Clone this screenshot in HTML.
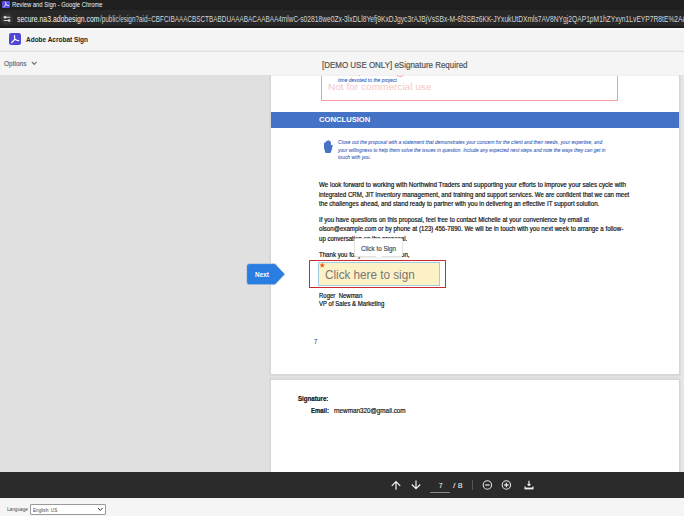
<!DOCTYPE html>
<html><head><meta charset="utf-8">
<style>
*{margin:0;padding:0;box-sizing:border-box}
html,body{width:684px;height:516px;overflow:hidden;background:#e0e0e0;font-family:"Liberation Sans",sans-serif}
.a{position:absolute}
.tx{position:absolute;white-space:nowrap;line-height:1;transform-origin:0 50%;font-family:"Liberation Sans",sans-serif}
</style></head><body>
<!-- chrome title bar -->
<div class="a" style="left:0;top:0;width:684px;height:9.6px;background:#1f1f1f"></div>
<div class="a" style="left:1.5px;top:1px;width:8px;height:7px;background:#5a4ee6;border-radius:1px"></div>
<svg class="a" style="left:1.5px;top:1px" width="8" height="7" viewBox="0 0 8 7"><path d="M3.7 1.2 Q3.7 2.8 4 3.6 L1.8 5.8 M4 3.6 Q5.1 4.5 6.5 4.6" stroke="#fff" stroke-width="0.9" fill="none" stroke-linecap="round"/></svg>
<!-- url bar -->
<div class="a" style="left:0;top:9.6px;width:684px;height:18px;background:#282828"></div>
<div class="a" style="left:0;top:26.2px;width:684px;height:1.4px;background:#1d1d1d"></div>
<div class="a" style="left:1.2px;top:13.4px;width:11.6px;height:11.6px;border-radius:50%;background:#353535"></div>
<svg class="a" style="left:1px;top:13px" width="12" height="12" viewBox="0 0 12 12"><path d="M4 4.3 H9.2 M2.8 7.5 H8" stroke="#e0e0e0" stroke-width="1.1" fill="none"/><circle cx="4" cy="4.3" r="1.3" fill="#e0e0e0"/><circle cx="8.1" cy="7.5" r="1.3" fill="#e0e0e0"/></svg>
<!-- acrobat header -->
<div class="a" style="left:0;top:27.6px;width:684px;height:23.6px;background:#f4f4f4;border-bottom:1px solid #ededed"></div>
<div class="a" style="left:0;top:27.6px;width:684px;height:2px;background:#f9f9f9"></div>
<div class="a" style="left:9px;top:33px;width:12px;height:12px;background:#5047d4;border-radius:2.2px"></div>
<svg class="a" style="left:9px;top:33px" width="12" height="12" viewBox="0 0 12 12"><path d="M5.5 2.7 Q5.5 5 5.9 6.3 L2.6 9.6 M5.9 6.3 Q7.6 7.6 9.7 7.7" stroke="#fff" stroke-width="1.25" fill="none" stroke-linecap="round" stroke-linejoin="round"/></svg>
<!-- main area -->
<div class="a" style="left:0;top:75px;width:684px;height:397px;background:#e0e0e0"></div>
<div class="a" style="left:679px;top:75px;width:5px;height:397px;background:#e6e6e6"></div>
<!-- page 1 -->
<div class="a" style="left:271px;top:75px;width:408px;height:299px;background:#fff;overflow:hidden;box-shadow:0 0 0 1.6px #d6d6d6">
  <div class="a" style="left:49.6px;top:-40px;width:297.4px;height:66.2px;border:1.5px solid #f49b9b"></div>
  <div class="a" style="left:0;top:37px;width:408px;height:16px;background:#4472c4"></div>
</div>
<!-- options bar -->
<div class="a" style="left:0;top:52px;width:684px;height:23px;background:#f5f5f5"></div>
<svg class="a" style="left:30.5px;top:61px" width="7" height="5" viewBox="0 0 7 5"><path d="M0.9 0.9 L3.2 3.4 L5.5 0.9" stroke="#6a6a6a" stroke-width="1.1" fill="none"/></svg>
<div class="a" style="left:271px;top:75px;width:408px;height:1px;background:#f0f0f0"></div>
<svg class="a" style="left:396px;top:74px" width="8" height="4" viewBox="0 0 8 4"><path d="M0.8 1.2 Q4 4.2 7.2 1.2" stroke="#f7b4b4" stroke-width="1.1" fill="none"/></svg>
<div class="a" style="left:359px;top:75px;width:1.2px;height:1.2px;background:#8aa2dc;border-radius:50%"></div>
<!-- page 2 -->
<div class="a" style="left:271px;top:380px;width:408px;height:92px;background:#fff;box-shadow:0 0 0 1.6px #d6d6d6"></div>
<!-- hand -->
<svg class="a" style="left:324px;top:140px" width="9" height="13" viewBox="0 0 9 13"><path d="M1.6 13 L0.9 10.8 L0 8.2 L0 3.4 Q0 2.6 0.9 2.6 L1.7 2.6 L1.8 1.5 Q2.3 0.7 3.3 1 L3.8 0.4 Q4.8 -0.2 5.4 0.7 L5.6 1.2 Q6.8 1.1 6.9 2.2 L6.9 5.6 L7.7 4.7 Q8.9 4.5 8.7 5.6 L7.6 10.3 L6.4 13 Z" fill="#4472c4"/></svg>
<!-- sign field -->
<div class="a" style="left:308.7px;top:259.7px;width:137.6px;height:28.4px;border:1.5px solid #cd2a2d;border-radius:0.5px"></div>
<div class="a" style="left:317.9px;top:262px;width:122.1px;height:24px;background:#fdf2c6;border:1px solid #a3cbe2"></div>
<svg class="a" style="left:318.5px;top:262px" width="7" height="7" viewBox="0 0 7 7"><polygon points="3.2,0.6 3.9,2.5 5.9,2.5 4.3,3.7 4.9,5.7 3.2,4.5 1.5,5.7 2.1,3.7 0.5,2.5 2.5,2.5" fill="#fa4a16"/></svg>
<!-- next button -->
<svg class="a" style="left:246px;top:263px" width="40" height="23" viewBox="0 0 40 23"><path d="M3.5 0.6 H29 L39 11.2 L29 21.8 H3.5 Q0.6 21.8 0.6 18.9 V3.5 Q0.6 0.6 3.5 0.6 Z" fill="#2a7de1" stroke="#ece2d6" stroke-width="0.6"/></svg>
<!-- bottom toolbar -->
<div class="a" style="left:0;top:472px;width:684px;height:26px;background:#2b2b2b"></div>
<svg class="a" style="left:389.6px;top:479.6px" width="12" height="12" viewBox="0 0 12 12"><path d="M6 9.8 V1.8 M1.8 5.8 L6 1.6 L10.2 5.8" stroke="#f2f2f2" stroke-width="1.2" fill="none"/></svg>
<svg class="a" style="left:410.1px;top:479.2px" width="12" height="12" viewBox="0 0 12 12"><path d="M6 1.6 V9.6 M1.8 5.5 L6 9.7 L10.2 5.5" stroke="#f2f2f2" stroke-width="1.2" fill="none"/></svg>
<div class="a" style="left:429.7px;top:491.6px;width:20.2px;height:1px;background:#8a8a8a"></div>
<div class="a" style="left:472px;top:480px;width:1px;height:10px;background:#555"></div>
<svg class="a" style="left:482px;top:480px" width="11" height="11" viewBox="0 0 11 11"><circle cx="5.4" cy="5" r="4.2" fill="none" stroke="#e0e0e0" stroke-width="1.1"/><path d="M3.2 5 H7.6" stroke="#e0e0e0" stroke-width="1.3"/></svg>
<svg class="a" style="left:501.2px;top:480px" width="11" height="11" viewBox="0 0 11 11"><circle cx="5.4" cy="5" r="4.2" fill="none" stroke="#e0e0e0" stroke-width="1.1"/><path d="M3.2 5 H7.6 M5.4 2.8 V7.2" stroke="#e0e0e0" stroke-width="1.3"/></svg>
<svg class="a" style="left:524px;top:479.5px" width="10" height="10" viewBox="0 0 10 10"><path d="M5 0.8 V5.2" stroke="#f0f0f0" stroke-width="1.2" fill="none"/><path d="M2.9 4 L7.1 4 L5 6.2 Z" fill="#f0f0f0"/><path d="M1.1 6.6 V8.6 H8.9 V6.6" stroke="#f0f0f0" stroke-width="1.3" fill="none"/><rect x="1.1" y="7.6" width="7.8" height="1.6" fill="#f0f0f0"/></svg>
<!-- language bar -->
<div class="a" style="left:0;top:498px;width:684px;height:18px;background:#f5f5f5"></div>
<div class="a" style="left:30.3px;top:504px;width:75.6px;height:10.8px;background:#fff;border:1px solid #9a9a9a;border-radius:1px"></div>
<svg class="a" style="left:97.3px;top:507.3px" width="7" height="5" viewBox="0 0 7 5"><path d="M1 1 L3.3 3.4 L5.6 1" stroke="#333" stroke-width="1" fill="none"/></svg>
<div id="t0" class="tx" style="left:12.00px;top:2.00px;font-size:6.6px;color:#f0f0f0;font-weight:normal;font-style:normal;transform:scaleX(0.8892);">Review and Sign - Google Chrome</div>
<div id="t1" class="tx" style="left:17.00px;top:16.00px;font-size:8.2px;color:#f2f2f2;font-weight:normal;font-style:normal;transform:scaleX(0.8390);">secure.na3.adobesign.com</div>
<div id="t2" class="tx" style="left:99.50px;top:16.00px;font-size:8.2px;color:#d4d4d4;font-weight:normal;font-style:normal;transform:scaleX(0.7791);">/public/esign?aid=CBFCIBAAACBSCTBABDUAAABACAABAA4rnlwC</div>
<div id="t3" class="tx" style="left:297.50px;top:16.00px;font-size:8.2px;color:#d4d4d4;font-weight:normal;font-style:normal;transform:scaleX(0.8172);">-s02818we0Zx-3lxDLl8Yefj9KxDJgyc3rAJBjVsSBx-M-6f3SBz6KK</div>
<div id="t4" class="tx" style="left:491.00px;top:16.00px;font-size:8.2px;color:#d4d4d4;font-weight:normal;font-style:normal;transform:scaleX(0.8178);">-JYxukUtDXmls7AV8NYgj2QAP1pM1hZYxyn1LvEYP7R8tE%2A&amp;</div>
<div id="t5" class="tx" style="left:26.00px;top:36.00px;font-size:7.2px;color:#222;font-weight:bold;font-style:normal;transform:scaleX(0.9008);">Adobe Acrobat Sign</div>
<div id="t6" class="tx" style="left:4.40px;top:60.00px;font-size:7.4px;color:#6a6a6a;font-weight:normal;font-style:normal;transform:scaleX(0.8790);-webkit-text-stroke:0.18px currentColor;">Options</div>
<div id="t7" class="tx" style="left:321.50px;top:61.00px;font-size:8.3px;color:#505050;font-weight:normal;font-style:normal;transform:scaleX(0.9600);-webkit-text-stroke:0.18px currentColor;">[DEMO USE ONLY] eSignature Required</div>
<div id="t8" class="tx" style="left:338.00px;top:78.00px;font-size:5.2px;color:#2b57b8;font-weight:normal;font-style:italic;transform:scaleX(0.9588);-webkit-text-stroke:0.06px currentColor;">time devoted to the project.</div>
<div id="t9" class="tx" style="left:327.80px;top:83.00px;font-size:9.2px;color:#f8c6c6;font-weight:normal;font-style:normal;transform:scaleX(1.0956);">Not for commercial use</div>
<div id="t10" class="tx" style="left:319.00px;top:116.00px;font-size:7.4px;color:#ffffff;font-weight:bold;font-style:normal;transform:scaleX(1.0325);">CONCLUSION</div>
<div id="t11" class="tx" style="left:338.00px;top:140.00px;font-size:5.2px;color:#2b57b8;font-weight:normal;font-style:italic;transform:scaleX(0.9455);-webkit-text-stroke:0.06px currentColor;">Close out the proposal with a statement that demonstrates your concern for the client and their needs, your expertise, and</div>
<div id="t12" class="tx" style="left:338.00px;top:148.00px;font-size:5.2px;color:#2b57b8;font-weight:normal;font-style:italic;transform:scaleX(0.9313);-webkit-text-stroke:0.06px currentColor;">your willingness to help them solve the issues in question. Include any expected next steps and note the ways they can get in</div>
<div id="t13" class="tx" style="left:338.00px;top:155.00px;font-size:5.2px;color:#2b57b8;font-weight:normal;font-style:italic;transform:scaleX(0.9535);-webkit-text-stroke:0.06px currentColor;">touch with you.</div>
<div id="t14" class="tx" style="left:319.00px;top:182.00px;font-size:6.4px;color:#111;font-weight:normal;font-style:normal;transform:scaleX(0.9781);-webkit-text-stroke:0.18px currentColor;">We look forward to working with Northwind Traders and supporting your efforts to improve your sales cycle with</div>
<div id="t15" class="tx" style="left:319.00px;top:192.00px;font-size:6.4px;color:#111;font-weight:normal;font-style:normal;transform:scaleX(0.9574);-webkit-text-stroke:0.18px currentColor;">integrated CRM, JIT Inventory management, and training and support services. We are confident that we can meet</div>
<div id="t16" class="tx" style="left:319.00px;top:201.00px;font-size:6.4px;color:#111;font-weight:normal;font-style:normal;transform:scaleX(0.9641);-webkit-text-stroke:0.18px currentColor;">the challenges ahead, and stand ready to partner with you in delivering an effective IT support solution.</div>
<div id="t17" class="tx" style="left:319.00px;top:217.00px;font-size:6.4px;color:#111;font-weight:normal;font-style:normal;transform:scaleX(0.9633);-webkit-text-stroke:0.18px currentColor;">If you have questions on this proposal, feel free to contact Michelle at your convenience by email at</div>
<div id="t18" class="tx" style="left:319.00px;top:226.00px;font-size:6.4px;color:#111;font-weight:normal;font-style:normal;transform:scaleX(0.9601);-webkit-text-stroke:0.18px currentColor;">olson@example.com or by phone at (123) 456-7890. We will be in touch with you next week to arrange a follow-</div>
<div id="t19" class="tx" style="left:319.00px;top:236.00px;font-size:6.4px;color:#111;font-weight:normal;font-style:normal;transform:scaleX(0.9511);-webkit-text-stroke:0.18px currentColor;">up conversation on the proposal.</div>
<div id="t20" class="tx" style="left:319.00px;top:252.00px;font-size:6.4px;color:#111;font-weight:normal;font-style:normal;transform:scaleX(0.9540);-webkit-text-stroke:0.18px currentColor;">Thank you for your consideration,</div>
<div id="t21" class="tx" style="left:318.70px;top:293.00px;font-size:6.4px;color:#111;font-weight:normal;font-style:normal;transform:scaleX(0.9375);-webkit-text-stroke:0.18px currentColor;">Roger&nbsp; Newman</div>
<div id="t22" class="tx" style="left:318.70px;top:301.00px;font-size:6.4px;color:#111;font-weight:normal;font-style:normal;transform:scaleX(0.9442);-webkit-text-stroke:0.18px currentColor;">VP of Sales &amp; Marketing</div>
<div id="t23" class="tx" style="left:313.90px;top:338.00px;font-size:7.4px;color:#4a5a78;font-weight:normal;font-style:normal;transform:scaleX(0.8000);-webkit-text-stroke:0.18px currentColor;">7</div>
<div id="t24" class="tx" style="left:298.30px;top:396.00px;font-size:6.8px;color:#111;font-weight:bold;font-style:normal;transform:scaleX(0.9041);-webkit-text-stroke:0.18px currentColor;">Signature:</div>
<div id="t25" class="tx" style="left:310.80px;top:408.00px;font-size:6.8px;color:#111;font-weight:bold;font-style:normal;transform:scaleX(0.8772);-webkit-text-stroke:0.18px currentColor;">Email:</div>
<div id="t26" class="tx" style="left:333.60px;top:408.00px;font-size:6.9px;color:#111;font-weight:normal;font-style:normal;transform:scaleX(0.9152);-webkit-text-stroke:0.18px currentColor;">rnewman320@gmail.com</div>
<div id="t27" class="tx" style="left:324.90px;top:268.00px;font-size:13.6px;color:#767676;font-weight:normal;font-style:normal;transform:scaleX(0.8603);">Click here to sign</div>
<div id="t29" class="tx" style="left:254.60px;top:271.00px;font-size:7.6px;color:#ffffff;font-weight:bold;font-style:normal;transform:scaleX(0.8440);">Next</div>
<div id="t30" class="tx" style="left:438.50px;top:482.00px;font-size:7.9px;color:#e6e6e6;font-weight:normal;font-style:normal;transform:scaleX(0.7972);-webkit-text-stroke:0.18px currentColor;">7</div>
<div id="t31" class="tx" style="left:453.20px;top:482.00px;font-size:7.6px;color:#dedede;font-weight:normal;font-style:normal;transform:scaleX(1.1357);-webkit-text-stroke:0.18px currentColor;">/ 8</div>
<div id="t32" class="tx" style="left:7.10px;top:506.00px;font-size:6.0px;color:#4a4a4a;font-weight:normal;font-style:normal;transform:scaleX(0.7864);">Language</div>
<div id="t33" class="tx" style="left:33.40px;top:507.00px;font-size:6.2px;color:#4a4a4a;font-weight:normal;font-style:normal;transform:scaleX(0.7517);">English: US</div>
<!-- tooltip -->
<div class="a" style="left:354px;top:238.1px;width:49px;height:19.2px;background:#fff;border:1px solid #e2e2e2;border-radius:2px;box-shadow:0 0.5px 1px rgba(0,0,0,0.08)"></div>
<svg class="a" style="left:374.5px;top:256.3px" width="8" height="4" viewBox="0 0 8 4"><path d="M0.8 0.4 L3.8 3.3 L6.8 0.4" fill="#fff" stroke="#e2e2e2" stroke-width="0.7"/><rect x="1" y="0" width="5.6" height="0.9" fill="#fff"/></svg>
<div id="t28" class="tx" style="left:361.00px;top:245.00px;font-size:7.6px;color:#4a4a4a;font-weight:normal;font-style:normal;transform:scaleX(0.8290);-webkit-text-stroke:0.18px currentColor;">Click to Sign</div>
</body></html>
